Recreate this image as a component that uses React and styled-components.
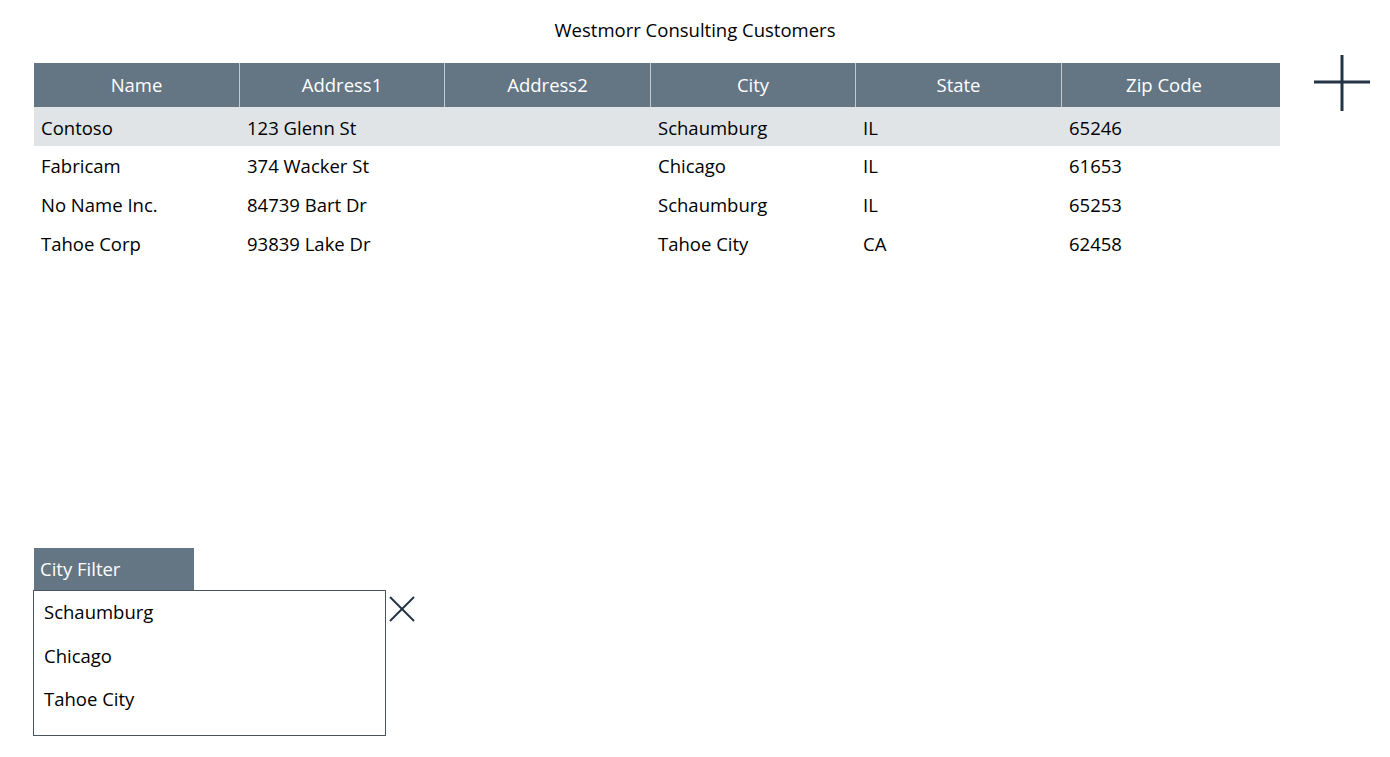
import React from 'react';
import styled, { createGlobalStyle } from 'styled-components';

const GlobalStyle = createGlobalStyle`
  body {
    margin: 0;
    background: #ffffff;
    font-family: 'Open Sans', 'Noto Sans', sans-serif;
    color: #000000;
  }
`

const Page = styled.div`
  width: 1390px;
  height: 757px;
  display: flex;
  flex-direction: column;
  overflow: hidden;
`

const Title = styled.div`
  height: 55px;
  display: flex;
  align-items: flex-start;
  justify-content: center;
  padding-top: 17px;
  box-sizing: border-box;
  font-size: 18.5px;
  line-height: 26px;
`

const TopRow = styled.div`
  display: flex;
  align-items: flex-start;
  padding-left: 34px;
`

const Table = styled.div`
  margin-top: 8px;
  width: 1246px;
`

const grid = `
  display: grid;
  grid-template-columns: 205px 205px 206px 205px 206px 219px;
`

const HeaderRow = styled.div`
  ${grid}
  height: 44px;
  background: #647584;
`

const HeaderCell = styled.div`
  display: flex;
  align-items: center;
  justify-content: center;
  color: #ffffff;
  font-size: 18.5px;
  padding-bottom: 2px;
  padding-right: ${p => (p.$last ? '14px' : '0')};
  border-left: ${p => (p.$first ? 'none' : '1px solid #c3cad1')};
`

const Row = styled.div`
  ${grid}
  height: 39px;
  background: ${p => (p.$selected ? '#e1e4e7' : 'transparent')};
`

const Cell = styled.div`
  display: flex;
  align-items: center;
  padding-left: ${p => (p.$first ? '7px' : '8px')};
  padding-top: ${p => (p.$top ? '1px' : '0')};
  font-size: 18.5px;
  color: #000000;
`

const AddButton = styled.div`
  margin-left: 34px;
  width: 56px;
  height: 56px;
  display: flex;
`

const FilterSection = styled.div`
  margin-top: 285px;
  padding-left: 33px;
  display: flex;
  flex-direction: column;
`

const FilterLabel = styled.div`
  margin-left: 1px;
  width: 160px;
  height: 42px;
  background: #647584;
  color: #ffffff;
  font-size: 18.5px;
  display: flex;
  align-items: center;
  padding-left: 6px;
  padding-bottom: 2px;
  box-sizing: border-box;
`

const FilterRow = styled.div`
  display: flex;
  align-items: flex-start;
`

const ListBox = styled.div`
  width: 353px;
  height: 146px;
  box-sizing: border-box;
  border: 1px solid #4a5460;
  padding-top: 6px;
  display: flex;
  flex-direction: column;
`

const ListItem = styled.div`
  height: 43.5px;
  line-height: 30px;
  padding-left: 10px;
  font-size: 18.5px;
`

const ClearButton = styled.div`
  margin-left: 3px;
  margin-top: 6px;
  width: 26px;
  height: 26px;
  display: flex;
`

const customers = [
  ['Contoso', '123 Glenn St', '', 'Schaumburg', 'IL', '65246'],
  ['Fabricam', '374 Wacker St', '', 'Chicago', 'IL', '61653'],
  ['No Name Inc.', '84739 Bart Dr', '', 'Schaumburg', 'IL', '65253'],
  ['Tahoe Corp', '93839 Lake Dr', '', 'Tahoe City', 'CA', '62458'],
];

const columns = ['Name', 'Address1', 'Address2', 'City', 'State', 'Zip Code'];
const cities = ['Schaumburg', 'Chicago', 'Tahoe City'];

function App() {
  return (
    <Page>
      <GlobalStyle />
      <Title>Westmorr Consulting Customers</Title>
      <TopRow>
        <Table>
          <HeaderRow>
            {columns.map((c, i) => (
              <HeaderCell key={c} $first={i === 0} $last={i === columns.length - 1}>{c}</HeaderCell>
            ))}
          </HeaderRow>
          {customers.map((row, r) => (
            <Row key={r} $selected={r === 0}>
              {row.map((v, i) => (
                <Cell key={i} $first={i === 0} $top={r === 0}>{v}</Cell>
              ))}
            </Row>
          ))}
        </Table>
        <AddButton>
          <svg width="56" height="56" viewBox="0 0 56 56">
            <line x1="28" y1="0" x2="28" y2="56" stroke="#233445" strokeWidth="3" />
            <line x1="0" y1="27" x2="56" y2="27" stroke="#233445" strokeWidth="3" />
          </svg>
        </AddButton>
      </TopRow>
      <FilterSection>
        <FilterLabel>City Filter</FilterLabel>
        <FilterRow>
          <ListBox>
            {cities.map(c => (
              <ListItem key={c}>{c}</ListItem>
            ))}
          </ListBox>
          <ClearButton>
            <svg width="26" height="26" viewBox="0 0 26 26">
              <line x1="1" y1="1" x2="25" y2="25" stroke="#233445" strokeWidth="2" />
              <line x1="25" y1="1" x2="1" y2="25" stroke="#233445" strokeWidth="2" />
            </svg>
          </ClearButton>
        </FilterRow>
      </FilterSection>
    </Page>
  );
}

export default App;
